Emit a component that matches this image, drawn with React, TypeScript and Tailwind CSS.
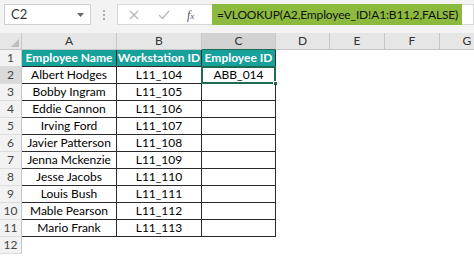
import React from "react";

const names = [
  "Albert Hodges",
  "Bobby Ingram",
  "Eddie Cannon",
  "Irving Ford",
  "Javier Patterson",
  "Jenna Mckenzie",
  "Jesse Jacobs",
  "Louis Bush",
  "Mable Pearson",
  "Mario Frank",
];

const extraCols = [
  { l: "D", w: "w-[54px]" },
  { l: "E", w: "w-[55px]" },
  { l: "F", w: "w-[55px]" },
  { l: "G", w: "w-[55px]" },
];

function RowHead({ n, active }: { n: number; active?: boolean }) {
  return (
    <div
      className={`w-[22px] shrink-0 h-full flex items-center justify-center border-r border-b border-r-[#c6c6c6] border-b-[#dcdcdc] text-[12px] text-[#444] ${
        active ? "bg-[#d9d9d9]" : "bg-[#f2f2f2]"
      }`}
    >
      {n}
    </div>
  );
}

export default function App() {
  return (
    <div
      className="w-[474px] h-[257px] overflow-hidden bg-white text-black"
      style={{ fontFamily: "Lato, 'Open Sans', sans-serif" }}
    >
      {/* formula bar */}
      <div className="h-[33px] bg-[#f3f3f3] flex items-start pt-[4px] pl-[4px]">
        <div className="w-[87px] h-[21px] bg-white border border-[#d0d0d0] flex items-center justify-between pl-[6px] pr-[6px] text-[13px] text-[#333]">
          <span>C2</span>
          <svg width="7" height="4" viewBox="0 0 7 4">
            <path d="M0 0 L7 0 L3.5 4 Z" fill="#666" />
          </svg>
        </div>
        <div className="w-[26px] h-[21px] flex items-center justify-center">
          <div className="flex flex-col gap-[2px]">
            <div className="w-[2px] h-[2px] bg-[#aaa]" />
            <div className="w-[2px] h-[2px] bg-[#aaa]" />
            <div className="w-[2px] h-[2px] bg-[#aaa]" />
          </div>
        </div>
        <div className="w-[95px] h-[21px] bg-white border border-[#d8d8d8] border-r-0 flex items-center pl-[10px]">
          <svg width="10" height="10" viewBox="0 0 10 10" className="ml-[1px]">
            <path d="M1 1 L9 9 M9 1 L1 9" stroke="#b5b5b5" strokeWidth="1.2" />
          </svg>
          <svg width="12" height="10" viewBox="0 0 12 10" className="ml-[19px]">
            <path d="M1 5 L4.5 8.5 L11 1" stroke="#b5b5b5" strokeWidth="1.2" fill="none" />
          </svg>
          <span
            className="ml-[17px] text-[12px] text-[#555] italic"
            style={{ fontFamily: "'Liberation Serif', serif" }}
          >
            f<span className="text-[9px]">x</span>
          </span>
        </div>
        <div className="w-[250px] h-[21px] bg-[#8cba3e] flex items-center pl-[5px] text-[12px] text-[#111] whitespace-nowrap tracking-[-0.15px]">
          =VLOOKUP(A2,Employee_ID!A1:B11,2,FALSE)
        </div>
        <div className="flex-1 h-[21px] bg-white border border-[#d8d8d8] border-l-0" />
      </div>

      {/* column headers */}
      <div className="h-[17px] flex text-[12px] text-[#333]">
        <div className="w-[22px] shrink-0 bg-[#e6e6e6] border-r border-b border-[#c6c6c6] relative">
          <svg width="8" height="8" viewBox="0 0 8 8" className="absolute right-[2px] bottom-[2px]">
            <path d="M8 0 L8 8 L0 8 Z" fill="#bdbdbd" />
          </svg>
        </div>
        <div className="w-[95px] shrink-0 bg-[#e6e6e6] border-r border-b border-[#c6c6c6] flex items-center justify-center">A</div>
        <div className="w-[85px] shrink-0 bg-[#e6e6e6] border-r border-b border-[#c6c6c6] flex items-center justify-center">B</div>
        <div className="w-[74px] shrink-0 bg-[#d2d2d2] border-r border-b border-r-[#c6c6c6] border-b-[#1f6b52] flex items-center justify-center">C</div>
        {extraCols.map((c) => (
          <div
            key={c.l}
            className={`${c.w} shrink-0 bg-[#e6e6e6] border-r border-b border-[#c6c6c6] flex items-center justify-center`}
          >
            {c.l}
          </div>
        ))}
      </div>

      {/* row 1 header */}
      <div className="h-[17px] flex">
        <RowHead n={1} />
        <div className="w-[95px] shrink-0 bg-[#17a19b] border-r border-b border-[#2b2b2b] text-white font-bold text-[12px] flex items-center justify-center whitespace-nowrap">
          Employee Name
        </div>
        <div className="w-[85px] shrink-0 bg-[#17a19b] border-r border-b border-[#2b2b2b] text-white font-bold text-[12px] flex items-center justify-center whitespace-nowrap">
          Workstation ID
        </div>
        <div className="w-[74px] shrink-0 bg-[#17a19b] border-r border-b border-[#2b2b2b] text-white font-bold text-[12px] flex items-center justify-center whitespace-nowrap">
          Employee ID
        </div>
      </div>

      {names.map((name, i) => {
        const row = i + 2;
        return (
          <div key={name} className="h-[17px] flex">
            <RowHead n={row} active={row === 2} />
            <div className="w-[95px] shrink-0 border-r border-b border-[#2b2b2b] text-[12px] flex items-center justify-center whitespace-nowrap">
              {name}
            </div>
            <div className="w-[85px] shrink-0 border-r border-b border-[#2b2b2b] text-[12px] flex items-center justify-center whitespace-nowrap">
              L11_{104 + i}
            </div>
            <div className="w-[74px] shrink-0 border-r border-b border-[#2b2b2b] text-[12px] flex items-center justify-center relative">
              {row === 2 && (
                <>
                  <div className="absolute -left-[1px] -top-[1px] -right-[1px] -bottom-[1px] border-2 border-[#1f6b52]" />
                  <div className="absolute -right-[3px] -bottom-[3px] w-[5px] h-[5px] bg-[#1f6b52] border border-white" />
                  <span>ABB_014</span>
                </>
              )}
            </div>
          </div>
        );
      })}

      <div className="h-[17px] flex">
        <RowHead n={12} />
      </div>
    </div>
  );
}
